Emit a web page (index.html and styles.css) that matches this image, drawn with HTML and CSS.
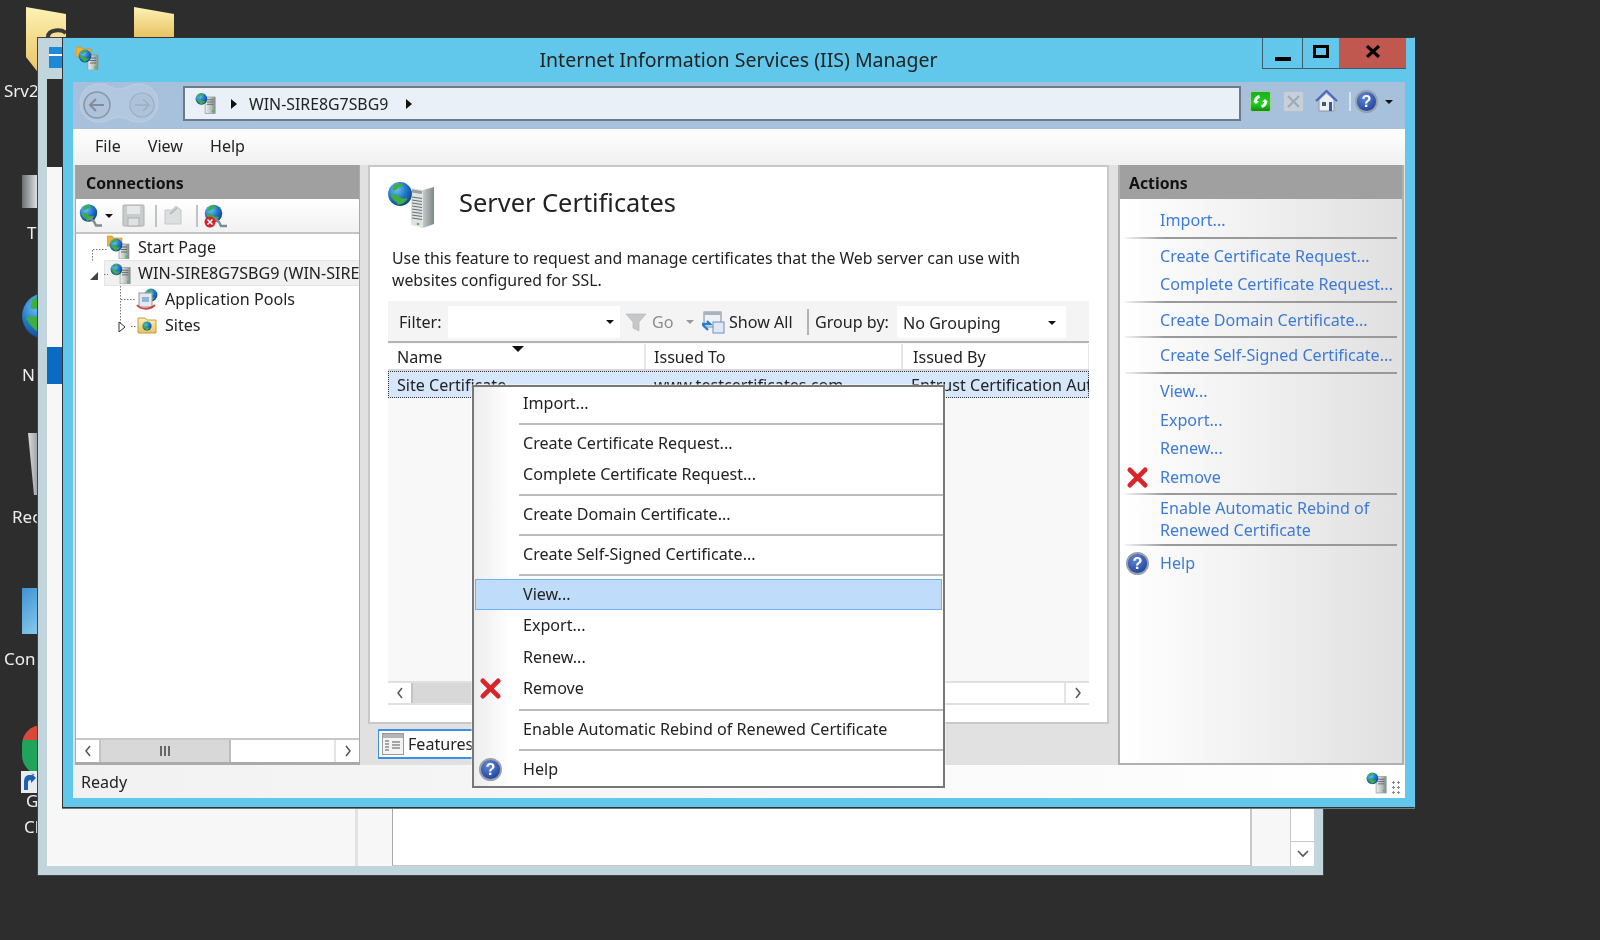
FILE: index.html
```html
<!DOCTYPE html>
<html lang="en">
<head>
<meta charset="utf-8">
<title>Internet Information Services (IIS) Manager</title>
<link rel="stylesheet" href="styles.css">
</head>
<body>
<svg class="defs" width="0" height="0" aria-hidden="true">
  <defs>
    <radialGradient id="gGlobe" cx="35%" cy="30%" r="75%"><stop offset="0" stop-color="#6fc4f2"/><stop offset=".55" stop-color="#1f78c8"/><stop offset="1" stop-color="#123f8c"/></radialGradient>
    <linearGradient id="gTower" x1="0" y1="0" x2="1" y2="0"><stop offset="0" stop-color="#eef0f0"/><stop offset=".6" stop-color="#b8bdbd"/><stop offset="1" stop-color="#7f8888"/></linearGradient>
    <linearGradient id="gSide" x1="0" y1="0" x2="1" y2="0"><stop offset="0" stop-color="#c4c9c9"/><stop offset="1" stop-color="#7d8686"/></linearGradient>
    <radialGradient id="gHelp" cx="40%" cy="30%" r="75%"><stop offset="0" stop-color="#5f88d8"/><stop offset="1" stop-color="#1c3f98"/></radialGradient>
    <linearGradient id="gFolder" x1="0" y1="0" x2="0" y2="1"><stop offset="0" stop-color="#fdf2b4"/><stop offset="1" stop-color="#e8c262"/></linearGradient>
    <linearGradient id="gGreen" x1="0" y1="0" x2="0" y2="1"><stop offset="0" stop-color="#16b016"/><stop offset=".6" stop-color="#22d022"/><stop offset="1" stop-color="#0c8a0c"/></linearGradient>
    <symbol id="globe" viewBox="0 0 24 24">
      <circle cx="12" cy="12" r="11" fill="url(#gGlobe)"/>
      <path d="M6 4c3-2 7-2 9 0-1 2-4 1-5 3S6 9 5 8zM3 13c3-2 7 0 9 2s5 1 7 1c-1 3-5 6-9 6-1-3-5-4-7-9z" fill="#3fae3f"/>
    </symbol>
    <symbol id="servglobe" viewBox="0 0 24 24">
      <rect x="11" y="6" width="11" height="18" fill="url(#gTower)" stroke="#8c9494" stroke-width=".7"/>
      <path d="M13 9h7M13 11.500h7M13 14h7" stroke="#5f6868" stroke-width="1"/>
      <circle cx="19.500" cy="21.500" r="1.200" fill="#3fc83f"/>
      <use href="#globe" x="0" y="1" width="14" height="14"/>
    </symbol>
    <symbol id="bigserver" viewBox="0 0 48 48">
      <path d="M24 7l12 2v38l-12-3z" fill="#dfe3e3"/>
      <path d="M36 9l11-3v37l-11 4z" fill="url(#gSide)"/>
      <path d="M25 16l10 1.500M25 19l10 1.500M25 22l10 1.500M25 25l10 1.500M25 28l10 1.500M25 31l10 1.500M25 34l10 1.500M25 37l10 1.500" stroke="#667070" stroke-width="1.100"/>
      <path d="M25 10l10 1.500" stroke="#97a0a0" stroke-width="3"/>
      <circle cx="31" cy="43" r="1.300" fill="#3fc83f"/>
      <use href="#globe" x="0" y="0" width="26" height="26"/>
    </symbol>
    <symbol id="startpage" viewBox="0 0 24 24">
      <path d="M0 1h5l2 2h8v8H0z" fill="#f2b233" stroke="#c98a1a" stroke-width=".6"/>
      <rect x="12" y="9" width="10" height="15" fill="url(#gTower)" stroke="#8c9494" stroke-width=".7"/>
      <path d="M14 12h6M14 14.500h6M14 17h6" stroke="#5f6868" stroke-width="1"/>
      <circle cx="19.500" cy="21.500" r="1.200" fill="#3fc83f"/>
      <use href="#globe" x="2" y="3" width="14" height="14"/>
    </symbol>
    <symbol id="redx" viewBox="0 0 24 24">
      <path d="M4 4L20 20M20 4L4 20" stroke="#d9242b" stroke-width="5" stroke-linecap="round" fill="none"/>
    </symbol>
    <symbol id="help" viewBox="0 0 24 24">
      <circle cx="12" cy="12" r="11" fill="url(#gHelp)" stroke="#9aa0aa" stroke-width="2"/>
      <text x="12" y="18" text-anchor="middle" class="help-q">?</text>
    </symbol>
    <symbol id="connglobe" viewBox="0 0 24 24">
      <use href="#globe" x="0" y="0" width="19" height="19"/>
      <path d="M10 14l5 4 2 4h6" stroke="#7c8b98" stroke-width="2.400" fill="none"/>
    </symbol>
  </defs>
</svg>

<div class="screen">
  <div class="desk-icon di-folder1"><svg viewBox="0 0 40 68" class="fill-svg"><path d="M0 0L40 7V50L14 68 0 50z" fill="url(#gFolder)"/><path d="M22 30c0-8 14-8 18-4" fill="none" stroke="#3a3a3a" stroke-width="4"/></svg></div>
  <div class="desk-icon di-folder2"><svg viewBox="0 0 40 30" class="fill-svg"><path d="M0 0L40 7V30H0z" fill="url(#gFolder)"/></svg></div>
  <div class="desk-icon di-drive"></div>
  <div class="desk-icon di-globe"><svg viewBox="0 0 24 24" class="fill-svg"><use href="#globe"/></svg></div>
  <div class="desk-icon di-trash"></div>
  <div class="desk-icon di-cp"></div>
  <div class="desk-icon di-chrome"></div>
  <div class="desk-icon di-short"><svg viewBox="0 0 16 22" class="fill-svg"><path d="M14 4H8C4 4 3 8 3 12v7h4v-7c0-2 1-3 3-3v3l5-5-5-5z" fill="#1f5fb4"/></svg></div>
  <span class="desk-label dl-srv">Srv2</span>
  <span class="desk-label dl-t">T</span>
  <span class="desk-label dl-n">N</span>
  <span class="desk-label dl-rec">Rec</span>
  <span class="desk-label dl-con">Con</span>
  <span class="desk-label dl-g">G</span>
  <span class="desk-label dl-cl">Cl</span>

  <section class="win-back">
    <div class="back-title"><div class="back-appicon"></div></div>
    <div class="back-body">
      <div class="back-left">
        <div class="back-dark"></div>
        <div class="back-blue"></div>
      </div>
      <div class="back-mid"></div>
      <div class="back-text"></div>
      <div class="back-gap"></div>
      <div class="back-scroll"><div class="back-scroll-btn"><svg viewBox="0 0 12 8" class="chev"><path d="M1 1l5 5 5-5" fill="none" stroke="#555" stroke-width="1.600"/></svg></div></div>
    </div>
  </section>

  <section class="win-iis">
    <header class="titlebar">
      <div class="title-left"><svg class="ico-app"><use href="#startpage"/></svg></div>
      <h1 class="title-text">Internet Information Services (IIS) Manager</h1>
      <div class="title-btns">
        <div class="wbtn wbtn-min"><span class="gl-min"></span></div>
        <div class="wbtn wbtn-max"><span class="gl-max"></span></div>
        <div class="wbtn wbtn-close"><svg viewBox="0 0 14 12" class="gl-close"><path d="M1.500 1L12.500 11M12.500 1L1.500 11" stroke="#000" stroke-width="3" fill="none"/></svg></div>
      </div>
    </header>

    <div class="client">
      <nav class="navbar">
        <svg class="navblob" viewBox="0 0 80 40">
          <path d="M20 1c10 0 12 5 20 5s10-5 20-5c11 0 19 8 19 19s-8 19-19 19c-10 0-12-5-20-5s-10 5-20 5C9 39 1 31 1 20S9 1 20 1z" fill="#b2c7e0" stroke="#bfd0e4"/>
          <circle cx="18" cy="22" r="13" fill="#adc3dc" stroke="#8d959e" stroke-width="1.500"/>
          <path d="M25 22H12M17 16l-6 6 6 6" fill="none" stroke="#848b94" stroke-width="2"/>
          <circle cx="63" cy="22" r="12" fill="#adc3dc" stroke="#a0aebd" stroke-width="1.200"/>
          <path d="M56 22H69M64 16l6 6-6 6" fill="none" stroke="#a0aebd" stroke-width="1.600"/>
        </svg>
        <div class="addr">
          <svg class="ico-addr"><use href="#servglobe"/></svg>
          <span class="addr-arrow"></span>
          <span class="addr-text">WIN-SIRE8G7SBG9</span>
          <span class="addr-arrow addr-arrow2"></span>
        </div>
        <div class="nav-tools">
          <svg class="tool-refresh" viewBox="0 0 21 21"><rect x=".5" y=".5" width="20" height="20" rx="2" fill="url(#gGreen)" stroke="#a8c8a8"/><path d="M9 4C6 5 4 7 4 10l-1 0 3 3 3-3H7c0-1 1-3 3-3zM12 17c3-1 5-3 5-6l1 0-3-3-3 3h2c0 1-1 3-3 3z" fill="#fff"/></svg>
          <svg class="tool-stop" viewBox="0 0 21 21"><rect x=".5" y=".5" width="20" height="20" rx="2" fill="#c5d0da" stroke="#b5c0ca"/><path d="M5 5l11 11M16 5L5 16" stroke="#a0aab2" stroke-width="2"/></svg>
          <svg class="tool-home" viewBox="0 0 23 23"><path d="M1 12L11.500 2 22 12" fill="none" stroke="#4c63c8" stroke-width="2"/><path d="M4 11l7.500-7 7.500 7v11H4z" fill="#eceff2" stroke="#8a96a4"/><rect x="14" y="13" width="3" height="9" fill="#2c5ca8"/><rect x="7" y="13" width="4" height="4" fill="#44586e"/></svg>
          <span class="tool-sep"></span>
          <svg class="tool-help"><use href="#help"/></svg>
          <span class="caret caret-nav"></span>
        </div>
      </nav>

      <div class="menubar">
        <span class="menu-item">File</span>
        <span class="menu-item">View</span>
        <span class="menu-item">Help</span>
      </div>

      <div class="main">
        <aside class="conn">
          <h2 class="pane-head">Connections</h2>
          <div class="conn-tools">
            <svg class="ct-globe"><use href="#connglobe"/></svg>
            <span class="caret caret-conn"></span>
            <svg class="ct-save" viewBox="0 0 23 23"><rect x="1" y="1" width="21" height="21" rx="1" fill="#c8cccc" stroke="#aab0b0"/><rect x="5" y="2" width="13" height="8" fill="#e6e8e8"/><rect x="6" y="14" width="11" height="8" fill="#e0e2e2" stroke="#aab0b0"/></svg>
            <span class="ct-sep"></span>
            <svg class="ct-edit" viewBox="0 0 21 21"><path d="M2 5h7l4-4 5 4v14H2z" fill="#dcdfdf" stroke="#c4c8c8"/><path d="M7 9l7-6" stroke="#b8bcbc" stroke-width="2"/></svg>
            <span class="ct-sep ct-sep2"></span>
            <svg class="ct-disc" viewBox="0 0 24 24"><use href="#connglobe"/><circle cx="6" cy="18" r="5.500" fill="#d2222e"/><path d="M3.500 15.500l5 5M8.500 15.500l-5 5" stroke="#fff" stroke-width="1.500"/></svg>
          </div>
          <div class="tree">
            <svg class="tree-lines" viewBox="0 0 60 100">
              <path d="M16.500 16V28M17 15.500H32M28 40.500H32M44.500 52V91M45 65.500H61M55 92.500H61" fill="none" stroke="#777" stroke-dasharray="1.500 1.500"/>
              <path d="M22 38v8h-8z" fill="#444"/>
              <path d="M43 88l6 5-6 5z" fill="#fff" stroke="#333"/>
            </svg>
            <div class="tree-row tr-start"><svg class="tr-ico tr-ico-sp"><use href="#startpage"/></svg><span>Start Page</span></div>
            <div class="tree-row tr-server"><svg class="tr-ico tr-ico-s"><use href="#servglobe"/></svg><span>WIN-SIRE8G7SBG9 (WIN-SIRE8</span></div>
            <div class="tree-row tr-child"><svg class="tr-ico" viewBox="0 0 22 22"><use href="#globe" x="8" y="0" width="14" height="14"/><rect x="3" y="5" width="13" height="14" fill="#e6e9ec" stroke="#8f979f"/><rect x="6" y="9" width="7" height="5" fill="#8fb4dc"/><path d="M1 17c4 5 13 5 18 0" stroke="#cf4540" stroke-width="2" fill="none"/></svg><span>Application Pools</span></div>
            <div class="tree-row tr-child"><svg class="tr-ico" viewBox="0 0 22 22"><path d="M2 4h7l2 2h9v13H2z" fill="url(#gFolder)" stroke="#c49c48"/><use href="#globe" x="6" y="7" width="10" height="10"/></svg><span>Sites</span></div>
            <div class="hscroll conn-scroll">
              <div class="sb-btn"><svg viewBox="0 0 8 12" class="sb-chev"><path d="M6 1L2 6l4 5" fill="none" stroke="#555" stroke-width="1.500"/></svg></div>
              <div class="sb-thumb conn-thumb"><span class="grip"></span></div>
              <div class="sb-track"></div>
              <div class="sb-btn"><svg viewBox="0 0 8 12" class="sb-chev"><path d="M2 1l4 5-4 5" fill="none" stroke="#555" stroke-width="1.500"/></svg></div>
            </div>
          </div>
        </aside>

        <div class="center">
          <article class="panel">
            <header class="panel-head">
              <svg class="ico-big"><use href="#bigserver"/></svg>
              <h2 class="panel-title">Server Certificates</h2>
            </header>
            <p class="desc">Use this feature to request and manage certificates that the Web server can use with websites configured for SSL.</p>
            <div class="filterbar">
              <span class="f-label">Filter:</span>
              <div class="f-input"><span class="caret"></span></div>
              <svg class="f-funnel" viewBox="0 0 20 20"><path d="M0 2h20l-7 8v9l-6-3v-6z" fill="#c4c8c8" stroke="#aeb3b3" stroke-width=".6"/></svg>
              <span class="f-go">Go</span>
              <span class="caret caret-go"></span>
              <svg class="f-show" viewBox="0 0 23 23"><rect x="2" y="1" width="17" height="15" fill="#eef2f6" stroke="#7c8894"/><rect x="2" y="1" width="17" height="3" fill="#a6b4c2"/><rect x="11" y="11" width="11" height="11" fill="#dfe9f5" stroke="#6f8fb8"/><path d="M0 13h8l-3-3M0 13l6 6" stroke="#2a7fd0" stroke-width="2.400" fill="none"/></svg>
              <span class="f-showtxt">Show All</span>
              <span class="f-sep"></span>
              <span class="f-group">Group by:</span>
              <div class="f-select"><span>No Grouping</span><span class="caret"></span></div>
            </div>
            <div class="list">
              <div class="list-head">
                <div class="col col-name">Name<span class="sort"></span></div>
                <div class="col">Issued To</div>
                <div class="col">Issued By</div>
              </div>
              <div class="list-row">
                <div class="col">Site Certificate</div>
                <div class="col">www.testcertificates.com</div>
                <div class="col">Entrust Certification Authority</div>
              </div>
              <div class="list-empty"></div>
              <div class="hscroll list-scroll">
                <div class="sb-btn"><svg viewBox="0 0 8 12" class="sb-chev"><path d="M6 1L2 6l4 5" fill="none" stroke="#555" stroke-width="1.500"/></svg></div>
                <div class="sb-thumb list-thumb"></div>
                <div class="sb-track"></div>
                <div class="sb-btn"><svg viewBox="0 0 8 12" class="sb-chev"><path d="M2 1l4 5-4 5" fill="none" stroke="#555" stroke-width="1.500"/></svg></div>
              </div>
            </div>
          </article>
          <div class="tabs">
            <div class="tab"><svg class="tab-ico" viewBox="0 0 22 22"><rect x=".5" y=".5" width="21" height="21" fill="#f4f4f4" stroke="#9a9a9a"/><rect x="1" y="1" width="20" height="4" fill="#b4b4b4"/><path d="M3 8h4M3 11h4M3 14h4M3 17h4M10 9h8M10 12h8M10 15h8" stroke="#8a8a8a" stroke-width="1.400"/></svg><span>Features View</span></div>
          </div>
        </div>

        <aside class="actions">
          <h2 class="pane-head">Actions</h2>
          <div class="act-body">
            <a class="act">Import...</a>
            <hr class="act-sep">
            <a class="act">Create Certificate Request...</a>
            <a class="act">Complete Certificate Request...</a>
            <hr class="act-sep">
            <a class="act">Create Domain Certificate...</a>
            <hr class="act-sep">
            <a class="act">Create Self-Signed Certificate...</a>
            <hr class="act-sep">
            <a class="act">View...</a>
            <a class="act">Export...</a>
            <a class="act">Renew...</a>
            <a class="act"><svg class="act-ico"><use href="#redx"/></svg>Remove</a>
            <hr class="act-sep">
            <a class="act act-wrap">Enable Automatic Rebind of Renewed Certificate</a>
            <hr class="act-sep">
            <a class="act"><svg class="act-ico"><use href="#help"/></svg>Help</a>
          </div>
        </aside>
      </div>

      <footer class="status">
        <span>Ready</span>
        <div class="status-right">
          <svg class="ico-status"><use href="#servglobe"/></svg>
          <span class="sizegrip"></span>
        </div>
      </footer>
    </div>

    <div class="ctx">
      <div class="ctx-gutter"></div>
      <div class="ctx-list">
        <div class="ctx-item">Import...</div>
        <div class="ctx-sep"></div>
        <div class="ctx-item">Create Certificate Request...</div>
        <div class="ctx-item">Complete Certificate Request...</div>
        <div class="ctx-sep"></div>
        <div class="ctx-item">Create Domain Certificate...</div>
        <div class="ctx-sep"></div>
        <div class="ctx-item">Create Self-Signed Certificate...</div>
        <div class="ctx-sep"></div>
        <div class="ctx-item ctx-hover">View...</div>
        <div class="ctx-item">Export...</div>
        <div class="ctx-item">Renew...</div>
        <div class="ctx-item"><svg class="ctx-ico"><use href="#redx"/></svg>Remove</div>
        <div class="ctx-sep"></div>
        <div class="ctx-item">Enable Automatic Rebind of Renewed Certificate</div>
        <div class="ctx-sep"></div>
        <div class="ctx-item"><svg class="ctx-ico"><use href="#help"/></svg>Help</div>
      </div>
    </div>
  </section>
</div>
</body>
</html>
```
FILE: styles.css
```css
* { box-sizing: border-box; }
html, body { margin: 0; padding: 0; }
body { width: 1600px; height: 940px; overflow: hidden; background: #2d2d2d; font-family: "Noto Sans", "Open Sans", sans-serif; font-size: 16.100px; color: #222; }
.defs { position: absolute; }
.help-q { font: bold 17px "Liberation Sans", sans-serif; fill: #fff; }
.screen { position: relative; width: 1600px; height: 940px; background: #2d2d2d; filter: blur(.45px); overflow: hidden; }
.fill-svg { display: block; width: 100%; height: 100%; }

/* desktop canvas */
.desk-icon { position: absolute; }
.di-folder1 { left: 26px; top: 7px; width: 40px; height: 68px; }
.di-folder2 { left: 134px; top: 7px; width: 40px; height: 30px; }
.di-drive { left: 22px; top: 175px; width: 16px; height: 33px; background: linear-gradient(90deg, #6a7072, #e3e6e6); }
.di-globe { left: 20px; top: 291px; width: 50px; height: 50px; }
.di-trash { left: 28px; top: 433px; width: 12px; height: 62px; background: linear-gradient(90deg, #d8dcdc, #8d9294); clip-path: polygon(0 0, 100% 0, 100% 100%, 50% 100%); }
.di-cp { left: 22px; top: 588px; width: 20px; height: 46px; background: linear-gradient(135deg, #3d93d4, #8fcdee); }
.di-chrome { left: 22px; top: 725px; width: 40px; height: 50px; border-radius: 25px; background: linear-gradient(180deg, #d8493a 0 30%, #20a35a 30%); }
.di-short { left: 21px; top: 771px; width: 16px; height: 22px; background: #e8ecf0; }
.desk-label { position: absolute; color: #eee; font-size: 17px; line-height: 22px; white-space: nowrap; }
.dl-srv { left: 4px; top: 80px; }
.dl-t { left: 27px; top: 222px; }
.dl-n { left: 22px; top: 364px; }
.dl-rec { left: 12px; top: 506px; }
.dl-con { left: 4px; top: 648px; }
.dl-g { left: 26px; top: 790px; }
.dl-cl { left: 24px; top: 816px; }

/* back window */
.win-back { position: absolute; left: 37px; top: 37px; width: 1287px; height: 839px; background: #c2d5dc; border: 1px solid #3c4648; padding: 0 9px 9px 9px; display: flex; flex-direction: column; }
.back-title { height: 41px; flex: none; }
.back-appicon { width: 13px; height: 21px; margin: 9px 0 0 2px; background: linear-gradient(#1c8ad8 0 35%, #fff 35% 45%, #1c8ad8 45%); }
.back-body { flex: 1; display: flex; min-height: 0; }
.back-left { width: 308px; background: #f7f7f7; display: flex; flex-direction: column; }
.back-dark { height: 88px; background: #2d2d2d; }
.back-blue { height: 37px; margin-top: 180px; background: #0a6cc0; }
.back-mid { width: 37px; background: #f7f7f7; border-left: 3px solid #e2e2e2; }
.back-text { width: 858px; background: #fff; border-left: 1px solid #a8a8a8; border-bottom: 1px solid #c8c8c8; }
.back-gap { width: 40px; background: #f7f7f7; border-left: 2px solid #c8c8c8; }
.back-scroll { flex: 1; background: #fff; border-left: 1px solid #c8c8c8; display: flex; align-items: flex-end; }
.back-scroll-btn { flex: 1; height: 25px; border-top: 1px solid #c8c8c8; display: flex; align-items: center; justify-content: center; }
.chev { width: 12px; height: 8px; }

/* front window */
.win-iis { position: absolute; left: 62px; top: 37px; width: 1353px; height: 771px; background: #62c8eb; border: 1px solid #333; border-right-color: #62c8eb; box-shadow: 0 1px 0 #777; display: flex; flex-direction: column; }
.titlebar { height: 44px; flex: none; display: grid; grid-template-columns: 1fr auto 1fr; align-items: start; }
.title-left { padding: 8px 0 0 13px; }
.ico-app { width: 24px; height: 24px; display: block; }
.title-text { margin: 0; font-size: 19.500px; font-weight: 400; line-height: 44px; color: #222; white-space: nowrap; }
.title-btns { display: flex; justify-content: flex-end; padding-right: 8px; }
.wbtn { height: 31px; display: flex; align-items: center; justify-content: center; border: 1px solid #3d5b68; border-top: 0; border-right-width: 0; }
.wbtn-min { width: 40px; align-items: flex-end; padding-bottom: 7px; }
.wbtn-max { width: 37px; padding-bottom: 3px; }
.wbtn-close { width: 67px; background: #c0584f; border-left: 0; border-right: 0; padding-bottom: 3px; }
.gl-min { display: block; width: 16px; height: 4px; background: #000; }
.gl-max { display: block; width: 16px; height: 13px; border: 3px solid #000; }
.gl-close { width: 16px; height: 13px; }

.client { flex: none; margin: 0 9px 0 10px; height: 716px; background: #e1e1e1; display: flex; flex-direction: column; }

.navbar { height: 47px; flex: none; background: linear-gradient(#a6bfdb, #a8c1dc); display: flex; align-items: center; padding: 0 0 4px 6px; }
.navblob { width: 80px; height: 40px; flex: none; display: block; margin-bottom: 2px; }
.addr { width: 1058px; height: 35px; margin-left: 24px; background: #e9f0f7; border: 2px solid #6d7a87; display: flex; align-items: center; padding-left: 10px; flex: none; }
.ico-addr { width: 22px; height: 23px; flex: none; margin-top: -2px; }
.addr-arrow { width: 0; height: 0; border: 5px solid transparent; border-left: 6px solid #111; border-right: 0; margin-left: 14px; flex: none; }
.addr-text { margin-left: 12px; font-size: 15.850px; white-space: nowrap; }
.addr-arrow2 { margin-left: 18px; }
.nav-tools { flex: 1; display: flex; align-items: center; padding: 0 0 4px 9px; }
.tool-refresh { width: 21px; height: 21px; flex: none; }
.tool-stop { width: 21px; height: 21px; flex: none; margin-left: 12px; }
.tool-home { width: 23px; height: 23px; flex: none; margin-left: 11px; margin-top: -3px; }
.tool-sep { width: 2px; height: 19px; background: #d5e2ef; margin-left: 11px; flex: none; }
.tool-help { width: 23px; height: 23px; flex: none; margin-left: 4px; }
.caret { display: inline-block; width: 0; height: 0; border: 4px solid transparent; border-top: 4px solid #111; border-bottom: 0; flex: none; }
.caret-nav { margin-left: 7px; }

.menubar { height: 36px; flex: none; background: linear-gradient(#fff, #f0f0f0); display: flex; align-items: center; padding: 0 0 3px 22px; gap: 27px; }

.main { flex: none; height: 600px; display: grid; grid-template-columns: 285px 739px 286px; column-gap: 10px; padding-left: 2px; }
.pane-head { margin: 0; height: 34px; background: #a0a0a0; font-size: 15.800px; font-weight: 700; color: #111; line-height: 36px; padding-left: 10px; flex: none; }

.conn { display: flex; flex-direction: column; border-right: 1px solid #aaa; border-left: 1px solid #aaa; border-bottom: 3px solid #aaa; background: #fff; }
.conn-tools { height: 35px; flex: none; display: flex; align-items: center; padding-left: 3px; background: linear-gradient(#fff, #f1f1f1); border-bottom: 2px solid #c4c4c4; }
.ct-globe { width: 24px; height: 25px; flex: none; }
.caret-conn { margin-left: 2px; }
.ct-save { width: 23px; height: 23px; margin-left: 9px; flex: none; }
.ct-sep { width: 2px; height: 22px; margin-left: 10px; background: #bfc3c3; flex: none; }
.ct-edit { width: 21px; height: 21px; margin-left: 6px; flex: none; }
.ct-sep2 { margin-left: 12px; }
.ct-disc { width: 24px; height: 24px; margin-left: 6px; flex: none; }

.tree { flex: 1; position: relative; display: flex; flex-direction: column; overflow: hidden; min-height: 0; }
.tree-lines { position: absolute; left: 0; top: 0; width: 60px; height: 100px; }
.tree-row { height: 26px; flex: none; display: flex; align-items: center; white-space: nowrap; }
.tr-ico { width: 22px; height: 22px; flex: none; margin-right: 7px; }
.tr-ico-sp { width: 24px; height: 24px; margin-right: 7px; }
.tr-start { padding-left: 31px; }
.tr-server { padding-left: 2px; margin-left: 28px; background: #f1f1f1; border: 1px solid #e4e4e4; border-right: 0; overflow: hidden; }
.tr-ico-s { margin-left: 3px; margin-right: 6px; }
.tr-child { padding-left: 60px; }

.hscroll { height: 24px; flex: none; display: flex; align-items: stretch; background: #fff; }
.conn-scroll { margin-top: auto; border-top: 2px solid #c8c8c8; }
.sb-btn { width: 25px; flex: none; display: flex; align-items: center; justify-content: center; background: #fff; border-right: 2px solid #c4c4c4; }
.sb-btn:last-child { border-right: 0; border-left: 2px solid #e4e4e4; }
.sb-chev { width: 8px; height: 12px; }
.sb-thumb { background: #d8d8d8; border-right: 2px solid #bcbcbc; display: flex; align-items: center; justify-content: center; }
.conn-thumb { width: 130px; }
.grip { width: 11px; height: 10px; background: repeating-linear-gradient(90deg, #666 0 2px, transparent 2px 4px); }
.sb-track { flex: 1; background: #fff; }

.center { display: flex; flex-direction: column; min-width: 0; }
.panel { height: 559px; flex: none; margin-left: -2px; background: #fff; border: 2px solid #c8c8c8; display: flex; flex-direction: column; padding: 14px 18px 17px 18px; min-height: 0; }
.panel-head { display: flex; align-items: center; height: 48px; flex: none; }
.ico-big { width: 48px; height: 48px; flex: none; margin-left: -1px; }
.panel-title { margin: 0 0 7px 24px; font-size: 25.400px; font-weight: 400; color: #222; }
.desc { margin: 19px 20px 10px 4px; font-size: 15.830px; line-height: 21.500px; }
.filterbar { height: 42px; flex: none; background: #f4f4f4; border-bottom: 2px solid #b4b4b4; padding-top: 2px; display: flex; align-items: center; white-space: nowrap; }
.f-label { width: 60px; padding-left: 11px; flex: none; }
.f-input { width: 172px; height: 32px; background: #fff; flex: none; display: flex; align-items: center; justify-content: flex-end; padding-right: 6px; }
.f-funnel { width: 20px; height: 20px; margin-left: 6px; flex: none; }
.f-go { width: 24px; margin-left: 6px; color: #8c8c8c; flex: none; }
.caret-go { margin-left: 10px; border-top-color: #999; }
.f-show { width: 23px; height: 23px; margin-left: 8px; flex: none; }
.f-showtxt { width: 78px; margin-left: 4px; flex: none; }
.f-sep { width: 2px; height: 26px; background: #b4b4b4; flex: none; }
.f-group { width: 88px; padding-left: 6px; flex: none; }
.f-select { width: 169px; height: 32px; background: #fff; flex: none; display: flex; align-items: center; justify-content: space-between; padding: 2px 10px 0 6px; }

.list { flex: 1; min-height: 0; display: flex; flex-direction: column; background: #f8f8f8; overflow: hidden; }
.list-head, .list-row { display: grid; grid-template-columns: 258px 257px 187px; flex: none; white-space: nowrap; }
.list-head { height: 27px; margin-top: 1px; background: #fff; border-bottom: 2px solid #d8d8d8; align-items: center; }
.col { padding-left: 7px; overflow: hidden; }
.list-head .col { height: 100%; display: flex; align-items: center; border-right: 2px solid #e6e6e6; padding-left: 8px; }
.list-head .col:last-child { padding-left: 10px; }
.col-name { justify-content: flex-start; position: relative; }
.sort { position: absolute; left: 124px; top: 2px; width: 0; height: 0; border: 6px solid transparent; border-top: 6px solid #111; border-bottom: 0; }
.list-head .col-name { padding-left: 9px; }
.list-row { height: 27px; background: #d7e7fb; border: 1px dotted #334; align-items: center; line-height: 24px; }
.list-row .col:first-child { padding-left: 8px; }
.list-empty { flex: 1; }
.list-scroll { border: 2px solid #e0e0e0; border-width: 2px 0; }
.list-thumb { width: 300px; }

.tabs { flex: 1; padding-top: 5px; }
.tab { width: 200px; height: 30px; margin-left: 8px; background: #fff; border: 1px solid #3b8eea; border-width: 2px 1px; display: flex; align-items: center; padding-left: 3px; white-space: nowrap; }
.tab-ico { width: 22px; height: 22px; flex: none; margin-right: 4px; }

.actions { display: flex; flex-direction: column; border: 2px solid #b0b0b0; border-top: 0; margin: 0 1px 0 -1px; }
.actions .pane-head { padding-left: 9px; }
.act-body { flex: 1; background: linear-gradient(90deg, #fff, #e0e0e0); padding: 7px 5px 0; display: flex; flex-direction: column; min-height: 0; }
.act { display: block; position: relative; min-height: 28.600px; padding-left: 35px; font-size: 16.100px; line-height: 28px; color: #3d7ad8; }
.act-wrap { line-height: 21.800px; padding-right: 20px; }
.act-sep { margin: 2px 0 3px; height: 2px; border: 0; background: linear-gradient(90deg, rgba(150,150,150,.1), #999 40px); flex: none; }
.act-ico { position: absolute; left: 1px; top: 3px; width: 23px; height: 23px; }

.status { flex: 1; min-height: 0; background: linear-gradient(90deg, #f1f1f1, #fff); display: flex; align-items: center; justify-content: space-between; padding-left: 8px; }
.status-right { display: flex; align-items: flex-end; }
.ico-status { width: 22px; height: 24px; flex: none; }
.sizegrip { width: 10px; height: 14px; margin: 0 4px 0 3px; background: radial-gradient(circle, #888 1px, transparent 1.400px) 0 0 / 5px 5px; }

/* context menu */
.ctx { position: absolute; left: 409px; top: 347px; width: 473px; height: 403px; background: #fff; border: 2px solid #777; display: flex; box-shadow: 0 0 0 1px rgba(255,255,255,.4); }
.ctx-gutter { width: 33px; flex: none; background: linear-gradient(90deg, #ededed, #fdfdfd); }
.ctx-list { position: absolute; left: 0; right: 0; top: 1px; }
.ctx-item { position: relative; height: 31px; line-height: 30px; padding-left: 49px; color: #222; white-space: nowrap; }
.ctx-sep { height: 9px; margin-left: 45px; padding-top: 4px; }
.ctx-sep::before { content: ""; display: block; height: 2px; background: #bcbcbc; }
.ctx-hover { margin: 0 1px; background: #c0dcfb; border: 1px solid #6eb0f0; line-height: 28px; padding-left: 47px; }
.ctx-hover ~ .ctx-item { height: 31.700px; }
.ctx-hover ~ .ctx-sep { height: 8.500px; }
.ctx-ico { position: absolute; left: 5px; top: 4px; width: 23px; height: 23px; }
```
